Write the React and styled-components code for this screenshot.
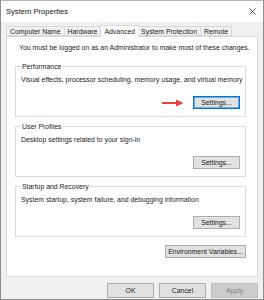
import React from 'react';
import styled, { createGlobalStyle } from 'styled-components';

const GlobalStyle = createGlobalStyle`
    html, body {
        margin: 0;
        padding: 0;
        background: #ffffff;
    }
    * {
        box-sizing: border-box;
    }
`;

const tabs = ['Computer Name', 'Hardware', 'Advanced', 'System Protection', 'Remote'];

const groups = [
    { title: 'Performance', text: 'Visual effects, processor scheduling, memory usage, and virtual memory', arrow: true },
    { title: 'User Profiles', text: 'Desktop settings related to your sign-in' },
    { title: 'Startup and Recovery', text: 'System startup, system failure, and debugging information' },
];

export default function App() {
    return (
        <>
            <GlobalStyle />
            <Window>
                <TitleBar>
                    <span>System Properties</span>
                    <CloseIcon viewBox="0 0 8 8">
                        <path d="M0.5 0.5 L7.5 7.5 M7.5 0.5 L0.5 7.5" stroke="#333" strokeWidth="0.9" />
                    </CloseIcon>
                </TitleBar>
                <Body>
                    <TabRow>
                        {tabs.map((t) => (
                            <Tab key={t} $active={t === 'Advanced'}>{t}</Tab>
                        ))}
                    </TabRow>
                    <Panel>
                        <Notice>You must be logged on as an Administrator to make most of these changes.</Notice>
                        {groups.map((g) => (
                            <Group key={g.title}>
                                <Legend>{g.title}</Legend>
                                <GroupBody>
                                    <GroupText>{g.text}</GroupText>
                                    <GroupFooter>
                                        {g.arrow && (
                                            <Arrow viewBox="0 0 22 8">
                                                <path d="M0 4 L16 4" stroke="#e8403a" strokeWidth="2" />
                                                <path d="M14 0.5 L21.5 4 L14 7.5 Z" fill="#e8403a" />
                                            </Arrow>
                                        )}
                                        <Button $focused={g.arrow}>Settings...</Button>
                                    </GroupFooter>
                                </GroupBody>
                            </Group>
                        ))}
                        <EnvRow>
                            <Button $wide>Environment Variables...</Button>
                        </EnvRow>
                    </Panel>
                    <DialogButtons>
                        <DialogButton>OK</DialogButton>
                        <DialogButton>Cancel</DialogButton>
                        <DialogButton $disabled>Apply</DialogButton>
                    </DialogButtons>
                </Body>
            </Window>
        </>
    );
}

const Window = styled.div`
    width: 264px;
    height: 300px;
    display: flex;
    flex-direction: column;
    border: 1px solid #8c8c8c;
    border-top-color: #b8b8b8;
    font-family: "Liberation Sans", Arial, sans-serif;
    font-size: 6.9px;
    color: #1a1a1a;
    overflow: hidden;
`;

const TitleBar = styled.div`
    height: 21px;
    flex: none;
    background: #ffffff;
    display: flex;
    align-items: center;
    justify-content: space-between;
    padding: 0 7px 0 5px;
    font-size: 7.6px;
    color: #111;
`;

const CloseIcon = styled.svg`
    width: 7px;
    height: 7px;
`;

const Body = styled.div`
    flex: 1;
    background: #f0f0f0;
    padding: 3px 5px 0 5px;
    display: flex;
    flex-direction: column;
`;

const TabRow = styled.div`
    display: flex;
    align-items: flex-end;
    height: 11px;
    position: relative;
    z-index: 1;
`;

const Tab = styled.div`
    height: ${(p) => (p.$active ? '12px' : '10px')};
    padding: 0 3px;
    margin-right: ${(p) => (p.$active ? '-1px' : '0')};
    margin-left: ${(p) => (p.$active ? '-1px' : '0')};
    margin-bottom: ${(p) => (p.$active ? '-1px' : '0')};
    display: flex;
    align-items: center;
    background: ${(p) => (p.$active ? '#ffffff' : '#f0f0f0')};
    border: 1px solid #d9d9d9;
    border-bottom: ${(p) => (p.$active ? 'none' : '1px solid #d9d9d9')};
    border-left-width: ${(p) => (p.$active ? '1px' : '0')};
    &:first-child {
        border-left-width: 1px;
    }
    white-space: nowrap;
`;

const Panel = styled.div`
    height: 241px;
    background: #ffffff;
    border: 1px solid #d9d9d9;
    padding: 5px 11px 0 8px;
    display: flex;
    flex-direction: column;
`;

const Notice = styled.div`
    padding-left: 4px;
    height: 11px;
    line-height: 11px;
    margin-bottom: 9px;
    white-space: nowrap;
`;

const Group = styled.fieldset`
    margin: 0 0 5px 0;
    padding: 0 5px 7px 5px;
    border: 1px solid #dcdcdc;
    min-width: 0;
`;

const Legend = styled.legend`
    padding: 0 1px;
    margin-left: 0;
    line-height: 9px;
`;

const GroupBody = styled.div`
    height: 38px;
    display: flex;
    flex-direction: column;
    justify-content: space-between;
`;

const GroupText = styled.div`
    margin-top: 4px;
    line-height: 10px;
    white-space: nowrap;
`;

const GroupFooter = styled.div`
    display: flex;
    justify-content: flex-end;
    align-items: center;
    gap: 9px;
`;

const Arrow = styled.svg`
    width: 22px;
    height: 8px;
`;

const Button = styled.div`
    width: ${(p) => (p.$wide ? '81px' : '47px')};
    height: 13px;
    display: flex;
    align-items: center;
    justify-content: center;
    background: #e1e1e1;
    border: 1px solid ${(p) => (p.$focused ? '#0078d7' : '#adadad')};
    box-shadow: ${(p) => (p.$focused ? 'inset 0 0 0 0.5px #0078d7' : 'none')};
    white-space: nowrap;
`;

const EnvRow = styled.div`
    margin-top: 3px;
    display: flex;
    justify-content: flex-end;
`;

const DialogButtons = styled.div`
    display: flex;
    justify-content: flex-end;
    gap: 5px;
    margin-top: 6px;
`;

const DialogButton = styled.div`
    width: 47px;
    height: 15px;
    display: flex;
    align-items: center;
    justify-content: center;
    background: ${(p) => (p.$disabled ? '#cccccc' : '#e1e1e1')};
    border: 1px solid ${(p) => (p.$disabled ? '#bfbfbf' : '#adadad')};
    color: ${(p) => (p.$disabled ? '#838383' : '#1a1a1a')};
`;
